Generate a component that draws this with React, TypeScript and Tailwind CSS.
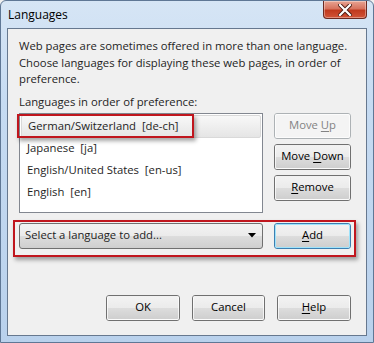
import React from "react";

const languages = [
  "German/Switzerland  [de-ch]",
  "Japanese  [ja]",
  "English/United States  [en-us]",
  "English  [en]",
];

// plain Win7 push button
const WinButton = ({
  children,
  disabled,
  focused,
  className = "",
}: {
  children: React.ReactNode;
  disabled?: boolean;
  focused?: boolean;
  className?: string;
}) => {
  const border = disabled
    ? "border-[#adb2b5] text-[#838383]"
    : focused
    ? "border-[#3c7fb1] text-black"
    : "border-[#707070] text-black";
  const fill = disabled
    ? "bg-[#f4f4f4]"
    : "bg-[linear-gradient(#f2f2f2_0%,#ebebeb_50%,#dddddd_50%,#cfcfcf_100%)]";
  return (
    <div
      className={`flex h-[26px] shrink-0 items-center justify-center rounded-[3px] border ${border} ${className}`}
    >
      <div
        className={`flex h-full w-full items-center justify-center rounded-[2px] border ${
          focused ? "border-[#9fe3fb]" : "border-white/70"
        } ${fill} whitespace-pre`}
      >
        {children}
      </div>
    </div>
  );
};

const U = ({ children }: { children: React.ReactNode }) => (
  <span className="underline underline-offset-2">{children}</span>
);

export default function App() {
  return (
    <div className="relative h-[343px] w-[374px] overflow-hidden bg-[#f0f0f0] font-['Open_Sans',sans-serif] text-[11.3px] text-[#1e1e1e]">
      {/* window frame */}
      <div className="flex h-full w-full flex-col rounded-t-[6px] border border-[#5f7795] bg-[linear-gradient(180deg,#d6e5f5_0%,#c6dbf2_30%,#b9d1ec_100%)] px-[6px] pb-[6px]">
        {/* title bar */}
        <div className="flex h-[27px] shrink-0 items-start justify-between">
          <div className="pl-px pt-[6px] text-[12px] leading-[16px] text-black">Languages</div>
          <div className="flex h-[18px] w-[44px] items-center justify-center rounded-b-[4px] border border-t-0 border-[#6b2a22] bg-[linear-gradient(#e8a493_0%,#d7735e_45%,#c0391e_55%,#d25438_100%)] shadow-[inset_0_0_0_1px_rgba(255,255,255,0.35)]">
            <svg width="14" height="12" viewBox="0 0 14 12">
              <path
                d="M2 1 L12 11 M12 1 L2 11"
                stroke="#4a1a12"
                strokeWidth="4"
                strokeLinecap="square"
              />
              <path
                d="M2 1 L12 11 M12 1 L2 11"
                stroke="#ffffff"
                strokeWidth="2.2"
                strokeLinecap="square"
              />
            </svg>
          </div>
        </div>

        {/* client area */}
        <div className="relative min-h-0 flex-1 whitespace-nowrap border border-[#66788f] bg-[#f0f0f0] pl-[11px] pr-[15px] pt-[9px]">
          <p className="leading-[16.5px]">
            Web pages are sometimes offered in more than one language.
            <br />
            Choose languages for displaying these web pages, in order of
            <br />
            preference.
          </p>
          <div className="mt-[6px] leading-[16px]">Languages in order of preference:</div>

          <div className="mt-[3px] flex gap-[11px]">
            {/* list box */}
            <div className="h-[100px] w-[244px] border border-[#828790] bg-white p-px">
              {languages.map((l, i) => (
                <div
                  key={l}
                  className={`flex items-center whitespace-pre pl-[6px] ${
                    i === 0
                      ? "h-[23px] rounded-[2px] border border-[#d9d9d9] bg-[linear-gradient(#f8f8f8,#e5e5e5)] pl-[5px]"
                      : "h-[22px]"
                  }`}
                >
                  {l}
                </div>
              ))}
            </div>
            <div className="flex w-[77px] flex-col gap-[5px]">
              <WinButton disabled>
                Move <U>U</U>p
              </WinButton>
              <WinButton>
                Move <U>D</U>own
              </WinButton>
              <WinButton>
                <U>R</U>emove
              </WinButton>
            </div>
          </div>

          <div className="mt-[10px] flex gap-[11px]">
            <div className="flex h-[26px] w-[244px] items-center justify-between rounded-[3px] border border-[#707070] bg-[linear-gradient(#f2f2f2_0%,#ebebeb_50%,#dddddd_50%,#cfcfcf_100%)] pl-[5px] pr-[6px]">
              <span>Select a language to add...</span>
              <svg width="8" height="5" viewBox="0 0 8 5">
                <path d="M0 0 H8 L4 4.5 Z" fill="#000" />
              </svg>
            </div>
            <WinButton focused className="w-[77px]">
              <U>A</U>dd
            </WinButton>
          </div>

          <div className="mt-[46px] flex justify-end gap-[12px]">
            <WinButton className="w-[74px]">OK</WinButton>
            <WinButton className="w-[73px]">Cancel</WinButton>
            <WinButton className="w-[74px]">
              <U>H</U>elp
            </WinButton>
          </div>

          {/* red annotation boxes */}
          <div className="pointer-events-none absolute left-[9px] top-[85px] h-[24px] w-[177px] border-2 border-[#c0161e] shadow-[2px_3px_4px_rgba(0,0,0,0.35)]" />
          <div className="pointer-events-none absolute left-[5px] top-[191px] h-[37px] w-[343px] border-2 border-[#c0161e] shadow-[2px_3px_4px_rgba(0,0,0,0.35)]" />
        </div>
      </div>
    </div>
  );
}
